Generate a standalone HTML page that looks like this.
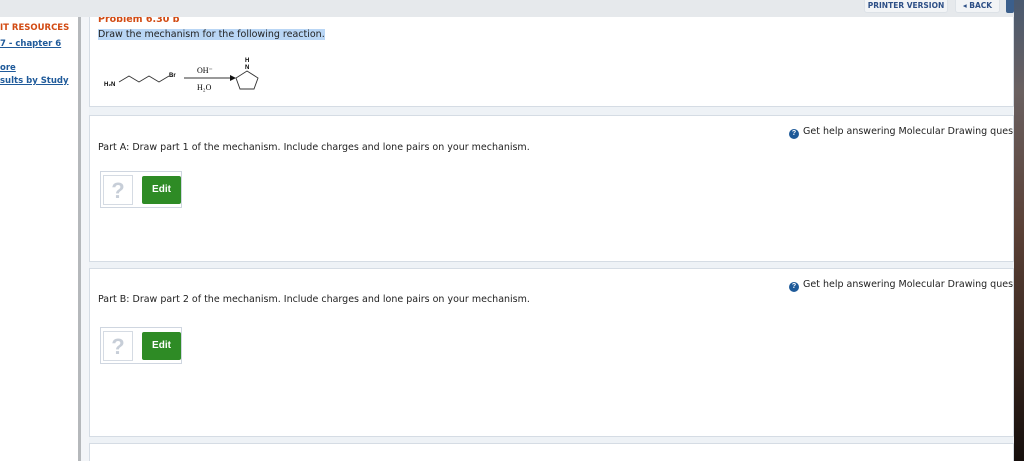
<!DOCTYPE html>
<html><head><style>
*{margin:0;padding:0;box-sizing:border-box}
html,body{width:1024px;height:461px;overflow:hidden}
body{background:#fff;font-family:"DejaVu Sans",sans-serif;position:relative}
.top{position:absolute;left:0;top:0;width:1024px;height:17px;background:#e6e9ec}
.btn{position:absolute;top:0;height:13px;background:#f2f4f6;border:1px solid #dde2e7;border-top:none;border-radius:0 0 3px 3px;font:bold 7.5px "DejaVu Sans",sans-serif;color:#2d4f86;text-align:center;line-height:12px}
.vl{position:absolute;left:78px;top:17px;width:3px;height:444px;background:#b5b8bb}
.vl2{position:absolute;left:81px;top:17px;width:8px;height:444px;background:#f3f5f8}
.main{position:absolute;left:89px;top:17px;width:925px;height:444px;background:#eef2f6;overflow:hidden}
.panel{position:absolute;left:0;width:925px;background:#fff;border:1px solid #d5dce4;overflow:hidden}
.strip{position:absolute;left:1014px;top:0;width:10px;height:461px;background:linear-gradient(#4a5a70 0%,#6a6060 20%,#5a4036 50%,#3a2820 75%,#150e0c 100%)}
.side{position:absolute;font:bold 8.5px "DejaVu Sans",sans-serif}
.t{font-size:9.5px;color:#222;position:absolute;white-space:nowrap}
.help{position:absolute;font-size:9.5px;color:#222;white-space:nowrap}
.help i{display:inline-block;width:10px;height:10px;border-radius:50%;background:#1e5a99;color:#fff;font:bold 7px sans-serif;text-align:center;line-height:10px;font-style:normal;margin-right:4px;vertical-align:-1px}
.ed{position:absolute;left:10px;width:82px;height:37px;border:1px solid #cfd6e0;background:#fff}
.ed .q{position:absolute;left:2px;top:3px;width:30px;height:30px;border:1px solid #d5dbe3;color:#c7ced8;font:bold 22px "Liberation Sans",sans-serif;text-align:center;line-height:30px}
.ed .e{position:absolute;left:41px;top:4px;width:39px;height:28px;background:#2e8b25;border-radius:2px;color:#fff;font:bold 10px "Liberation Sans",sans-serif;text-align:center;line-height:28px}
</style></head><body>
<div class="top"></div>
<div class="btn" style="left:864px;width:84px">PRINTER VERSION</div>
<div class="btn" style="left:955px;width:45px">◂ BACK</div>
<div style="position:absolute;left:1006px;top:0;width:8px;height:13px;background:#3b5f8c;border-radius:0 0 2px 2px"></div>
<div class="side" style="left:0;top:23px;color:#d24a12">IT RESOURCES</div>
<div class="side" style="left:0;top:39px;color:#1f5a9a;text-decoration:underline">7 - chapter 6</div>
<div class="side" style="left:0;top:63px;color:#1f5a9a;text-decoration:underline">ore</div>
<div class="side" style="left:0;top:76px;color:#1f5a9a;text-decoration:underline">sults by Study</div>
<div class="vl"></div><div class="vl2"></div>
<div class="main">
 <div class="panel" style="top:-1px;height:91px">
  <div style="position:absolute;left:8px;top:-3px;font:bold 9.5px 'DejaVu Sans',sans-serif;color:#d24a12">Problem 6.30 b</div>
  <div class="t" style="left:8px;top:12px;background:#b9d6f5">Draw the mechanism for the following reaction.</div>
  <svg style="position:absolute;left:12px;top:38px" width="170" height="40">
   <text x="2" y="31" font-size="6" font-family="Liberation Sans" font-weight="bold">H₂N</text>
   <polyline points="17,27 27,21 37,27 47,21 57,27 67,21" fill="none" stroke="#333" stroke-width="0.9"/>
   <text x="67" y="22" font-size="6" font-family="Liberation Sans" font-weight="bold">Br</text>
   <text x="95" y="18" font-size="8" font-family="Liberation Serif">OH⁻</text>
   <line x1="82" y1="23" x2="128" y2="23" stroke="#333" stroke-width="1"/>
   <polygon points="128,20 134,23 128,26" fill="#111"/>
   <text x="95" y="35" font-size="8" font-family="Liberation Serif">H₂O</text>
   <text x="143" y="7" font-size="6" font-family="Liberation Sans" font-weight="bold">H</text>
   <text x="143" y="14" font-size="6" font-family="Liberation Sans" font-weight="bold">N</text>
   <polygon points="145,16 156,23 152,34 138,34 134,23" fill="none" stroke="#333" stroke-width="0.9"/>
  </svg>
 </div>
 <div class="panel" style="top:98px;height:147px">
  <div class="help" style="left:699px;top:10px"><i>?</i>Get help answering Molecular Drawing ques</div>
  <div class="t" style="left:8px;top:26px">Part A: Draw part 1 of the mechanism. Include charges and lone pairs on your mechanism.</div>
  <div class="ed" style="top:55px"><div class="q">?</div><div class="e">Edit</div></div>
 </div>
 <div class="panel" style="top:251px;height:169px">
  <div class="help" style="left:699px;top:10px"><i>?</i>Get help answering Molecular Drawing ques</div>
  <div class="t" style="left:8px;top:25px">Part B: Draw part 2 of the mechanism. Include charges and lone pairs on your mechanism.</div>
  <div class="ed" style="top:58px"><div class="q">?</div><div class="e">Edit</div></div>
 </div>
 <div class="panel" style="top:426px;height:40px"></div>
</div>
<div class="strip"></div>
</body></html>
